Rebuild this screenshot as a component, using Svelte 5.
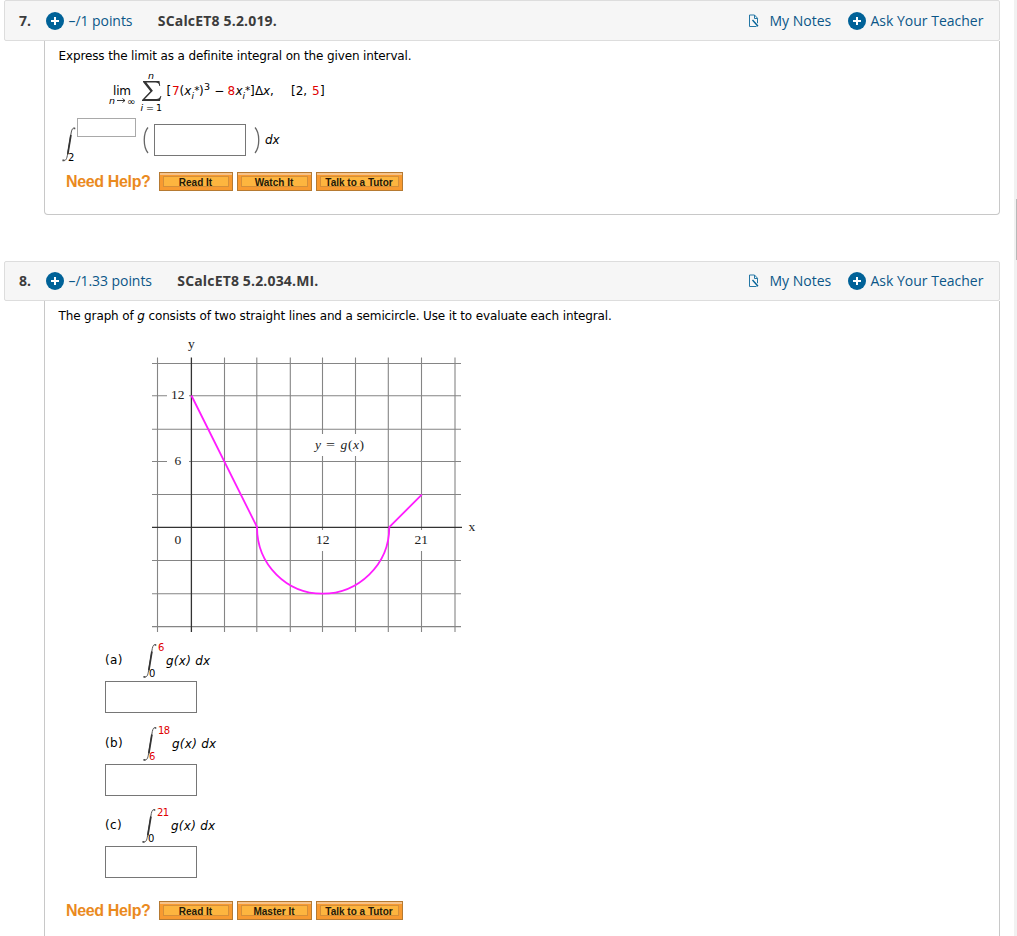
<script>
  const parts = [
    { label: '(a)', upper: '6', lower: '0', offset: 38, width: 23, upperWidth: 6 },
    { label: '(b)', upper: '18', lower: '6', lowerRed: true, offset: 38, width: 29, upperWidth: 12 },
    { label: '(c)', upper: '21', lower: '0', offset: 37, width: 29, upperWidth: 12 }
  ];
  const columns = [17.5, 84.5, 116.8, 150.3, 182.5, 215.5, 248.3, 281.5, 315];
  const rows = [28.5, 60.8, 94.2, 126.5, 159.5, 225.5, 258.8, 291.6];

  let answers = $state({ limit: '', integrand: '', parts: ['', '', ''] });
</script>

{#snippet plus()}
  <svg class="plus" width="18" height="18" viewBox="0 0 18 18" aria-hidden="true">
    <circle cx="9" cy="9" r="9" fill="#006298" />
    <path d="M9 5v8M5 9h8" stroke="#fff" stroke-width="2" />
  </svg>
{/snippet}

{#snippet header(number, points, width, code, codeWidth)}
  <header>
    <svg class="heading" width="340" height="38" role="presentation">
      <text class="bold" x="14" y="24" textLength="12">{number}</text>
      <text class="blue" x="63.5" y="24" textLength={width}>{points}</text>
      <text class="bold" x={width + 88.8} y="24" textLength={codeWidth}>{code}</text>
    </svg>
    <span class="toggle">{@render plus()}</span>
    <a class="notes" href="#notes">
      <svg width="12" height="14" viewBox="0 0 12 14" aria-hidden="true">
        <path d="M6.5 1H1.5v11.5h7M6.5 1l3 3.2v5M6.5 1v3.5h3" fill="none" stroke="#2477a5" />
        <path d="M4.5 6l5.5 6.2" stroke="#006298" stroke-width="1.4" />
      </svg>
      <span>My Notes</span>
    </a>
    <a class="ask" href="#ask">{@render plus()}<span>Ask Your Teacher</span></a>
  </header>
{/snippet}

{#snippet sign()}
  <path d="M13 1.2C10.8 .6 10 2 9.3 5L5.6 27C4.8 32 4 34 1 33.4" fill="none" stroke="#555" stroke-width="1" />
  <path d="M8.9 8L5.8 27" stroke="#333" stroke-width="1.7" />
  <path d="M11.6 1.5h1.7M.4 33.4h2" stroke="#555" stroke-width="1.7" />
{/snippet}

{#snippet help(second)}
  <div class="help">
    <span>Need Help?</span>
    <button class="first">Read It</button>
    <button class="second">{second}</button>
    <button class="third">Talk to a Tutor</button>
  </div>
{/snippet}

<div class="page">
  <main>
    <section class="question">
      {@render header('7.', '–/1 points', 64, 'SCalcET8 5.2.019.', 119)}
      <div class="content seven">
        <p class="prompt">Express the limit as a definite integral on the given interval.</p>
        <svg class="limit" width="230" height="48" role="img" aria-label="Limit of a Riemann sum">
          <text x="12" y="25" textLength="18">lim</text>
          <text class="small it" x="8" y="34" textLength="6">n</text>
          <path d="M16 30.5h8M21.5 28.5l2.5 2-2.5 2" fill="none" stroke="#222" stroke-width=".9" />
          <text class="infinity" x="26" y="34.5">∞</text>
          <text class="small it" x="47" y="9" textLength="6">n</text>
          <path d="M42 11h16.5l.7 5h-.8c-.5-2.6-1.5-3.5-4-3.5h-9l6.5 8.2-8 8.3h11.5c2.3 0 3.3-1 4.1-3h.9l-1.5 5H41v-1l8.3-8.7L42 12z" fill="#333" />
          <text class="small it" x="39.5" y="41">i</text>
          <text class="small" x="45" y="41">=</text>
          <text class="small" x="55" y="41">1</text>
          <text x="65.5" y="25">[</text>
          <text class="red" x="71" y="25">7</text>
          <text x="78.5" y="25">(</text>
          <text class="it" x="83.3" y="25">x</text>
          <text class="tiny it" x="90.5" y="29">i</text>
          <text class="star" x="93.3" y="24">*</text>
          <text x="98" y="25">)</text>
          <text class="small" x="103" y="20">3</text>
          <text x="113.3" y="25">−</text>
          <text class="red" x="126.5" y="25">8</text>
          <text class="it" x="134.5" y="25">x</text>
          <text class="tiny it" x="141.5" y="29">i</text>
          <text class="star" x="144" y="24">*</text>
          <text x="149" y="25">]</text>
          <text x="154" y="25">Δ</text>
          <text class="it" x="162" y="25">x</text>
          <text x="169" y="25">,</text>
          <text x="190" y="25">[2,</text>
          <text class="red" x="211" y="25">5</text>
          <text x="219" y="25">]</text>
        </svg>
        <div class="answer">
          <svg class="sign" width="15" height="38" aria-label="Integral from 2">
            {@render sign()}
            <text class="small" x="6" y="33.5">2</text>
          </svg>
          <input class="upper" aria-label="Upper limit" bind:value={answers.limit} />
          <svg class="paren" width="6" height="27"><path d="M5 .5C0 6 0 20 5 26" /></svg>
          <input class="box" aria-label="Integrand" bind:value={answers.integrand} />
          <svg class="paren close" width="6" height="27"><path d="M1 .5C6 6 6 20 1 26" /></svg>
          <i>dx</i>
        </div>
        {@render help('Watch It')}
      </div>
    </section>

    <section class="question">
      {@render header('8.', '–/1.33 points', 83.5, 'SCalcET8 5.2.034.MI.', 141)}
      <div class="content eight">
        <p class="prompt">The graph of <i>g</i> consists of two straight lines and a semicircle. Use it to evaluate each integral.</p>
        <svg class="graph" width="350" height="300" role="img" aria-label="Graph of y = g(x)">
          <g stroke="#858585" stroke-width="1.1">
            {#each columns as x}
              <path d="M{x} 22.5V297" />
            {/each}
            {#each rows as y}
              <path d="M12 {y}H321" />
            {/each}
          </g>
          <g fill="#fff">
            <rect x="27" y="53" width="22" height="15" />
            <rect x="27" y="119" width="22" height="15" />
            <rect x="173" y="99" width="55" height="22" />
            <rect x="172" y="195" width="21" height="21" />
            <rect x="271" y="195" width="21" height="21" />
          </g>
          <path d="M51.4 22.5V297M12 192.3H322" stroke="#333" stroke-width="1.3" />
          <path d="M51.4 60.5L117 192C117 230 147 258.7 182.5 258.7S249.3 230 249.3 192L281.8 159.7" fill="none" stroke="#ff1cff" stroke-width="1.8" />
          <text x="48" y="12.5">y</text>
          <text x="31" y="64">12</text>
          <text x="34.5" y="130">6</text>
          <text x="34.5" y="209">0</text>
          <text x="176" y="209">12</text>
          <text x="274.5" y="209">21</text>
          <text x="328.5" y="196">x</text>
          <text class="it" x="175" y="114">y</text>
          <text x="186" y="114" textLength="9" lengthAdjust="spacingAndGlyphs">=</text>
          <text class="it" x="200.5" y="114">g</text>
          <text x="208" y="114">(</text>
          <text class="it" x="213" y="114">x</text>
          <text x="219.5" y="114">)</text>
        </svg>
        <div class="parts">
          {#each parts as part, index}
            <div class="part">
              <div class="expression">
                <span class="label">{part.label}</span>
                <svg style:margin-left="{part.offset - 18}px" width={part.width} height="38" aria-label="Integral">
                  <g transform="translate(0 .5)">{@render sign()}</g>
                  <text class="small red" x="15" y="8" textLength={part.upperWidth}>{part.upper}</text>
                  <text class="small" class:red={part.lowerRed} x="6" y="33.5">{part.lower}</text>
                </svg>
                <i>g(x) dx</i>
              </div>
              <input class="box" aria-label="Part {part.label} answer" bind:value={answers.parts[index]} />
            </div>
          {/each}
        </div>
        {@render help('Master It')}
      </div>
    </section>
  </main>
  <div class="track"><div class="thumb"></div></div>
</div>

<style>
  :global(body) {
    background: #fff;
  }
  .page {
    display: flex;
    justify-content: space-between;
    height: 936px;
    overflow: hidden;
    color: #000;
    font: 12px/14px "DejaVu Sans", Verdana, sans-serif;
  }
  main {
    width: 996px;
    margin-left: 4px;
  }
  .question {
    margin-bottom: 46px;
  }
  header {
    position: relative;
    display: flex;
    align-items: center;
    box-sizing: border-box;
    height: 41px;
    border: 1px solid #ddd;
    border-radius: 2px;
    background: #f6f6f6;
    font: 14px/20px "Open Sans", sans-serif;
  }
  .question + .question header {
    height: 40px;
  }
  .heading {
    flex: none;
  }
  .heading text {
    font-size: 14px;
  }
  .bold {
    font-weight: 700;
    fill: #3c3c3c;
  }
  .blue {
    fill: #0b5688;
    font-weight: 500;
  }
  .toggle {
    position: absolute;
    left: 41px;
    height: 18px;
  }
  a {
    display: flex;
    align-items: center;
    color: #0b5688;
    font-weight: 500;
    text-decoration: none;
  }
  .notes {
    margin-left: 403px;
    gap: 9.5px;
    width: 100px;
    white-space: nowrap;
  }
  .ask {
    gap: 4.5px;
    white-space: nowrap;
  }
  .content {
    box-sizing: border-box;
    margin-left: 40px;
    border: 1px solid #c8c8c8;
    border-top: 0;
    border-radius: 0 0 4px 4px;
  }
  .seven {
    height: 174px;
    padding-top: 8px;
  }
  .eight {
    height: 680px;
    padding-top: 8px;
  }
  .prompt {
    height: 14px;
    margin: 0 0 0 13.5px;
    letter-spacing: -0.13px;
    white-space: nowrap;
  }
  .limit {
    display: block;
    margin: 7px 0 0 56px;
  }
  .limit text {
    font-size: 12px;
  }
  svg .small {
    font-size: 10px;
  }
  .limit .small {
    font-size: 9.5px;
  }
  .limit .tiny {
    font-size: 9px;
  }
  .limit .star {
    font-size: 10.5px;
  }
  .limit .infinity {
    font-size: 10px;
  }
  .it,
  i {
    font-style: italic;
  }
  svg .red {
    fill: #e00000;
  }
  .answer {
    display: flex;
    align-items: flex-start;
    height: 44px;
    margin-left: 17px;
  }
  .sign {
    margin-top: 9px;
  }
  input {
    box-sizing: border-box;
    padding: 1px 4px;
    border: 1px solid #767676;
    outline: 0;
    background: #fff;
  }
  .box {
    display: block;
    width: 92px;
    height: 32px;
  }
  .upper {
    width: 59px;
    height: 19px;
    border-color: #a9a9a9;
  }
  .answer .box {
    margin: 6px 8px 0 5px;
  }
  .paren {
    margin: 9px 0 0 7px;
    fill: none;
    stroke: #666;
    stroke-width: 1.3;
  }
  .close {
    margin-left: 0;
  }
  .answer i {
    margin: 15px 0 0 5px;
  }
  .help {
    display: flex;
    align-items: center;
    gap: 4px;
    height: 19px;
    margin: 10px 0 0 21px;
    font-family: "Liberation Sans", Arial, sans-serif;
    font-weight: 700;
  }
  .help span {
    width: 89px;
    color: #ea8a1e;
    font-size: 16px;
    letter-spacing: -0.35px;
    line-height: 18px;
    white-space: nowrap;
  }
  button {
    width: 75px;
    height: 19px;
    padding: 1px 1px 0 0;
    border: 1px solid #b67a32;
    background: #fdb53f;
    box-shadow: inset 0 2px #f6c38b, inset 0 0 0 3px #f89a30, inset 0 0 0 4px #d58f39;
    color: #24180a;
    font: 700 10px/15px "Liberation Sans", Arial, sans-serif;
    white-space: nowrap;
  }
  .first {
    width: 74px;
  }
  .third {
    width: 87px;
  }
  .graph {
    display: block;
    margin: 12px 0 0 95px;
    font: 13.5px "Liberation Serif", serif;
    fill: #222;
  }
  .parts {
    display: flex;
    flex-direction: column;
    gap: 12.5px;
    margin: 8px 0 0 60px;
  }
  .part {
    height: 70px;
  }
  .expression {
    display: flex;
    height: 38px;
  }
  .label {
    width: 18px;
    margin-top: 10px;
    letter-spacing: 0.3px;
  }
  .expression i {
    margin-top: 11px;
    letter-spacing: 0.25px;
    white-space: nowrap;
  }
  .eight .help {
    margin-top: 23px;
  }
  .track {
    width: 3px;
    background: #f1f1f1;
  }
  .thumb {
    width: 1px;
    height: 61px;
    margin: 199px 0 0 2px;
    background: #b9b9b9;
  }
</style>
